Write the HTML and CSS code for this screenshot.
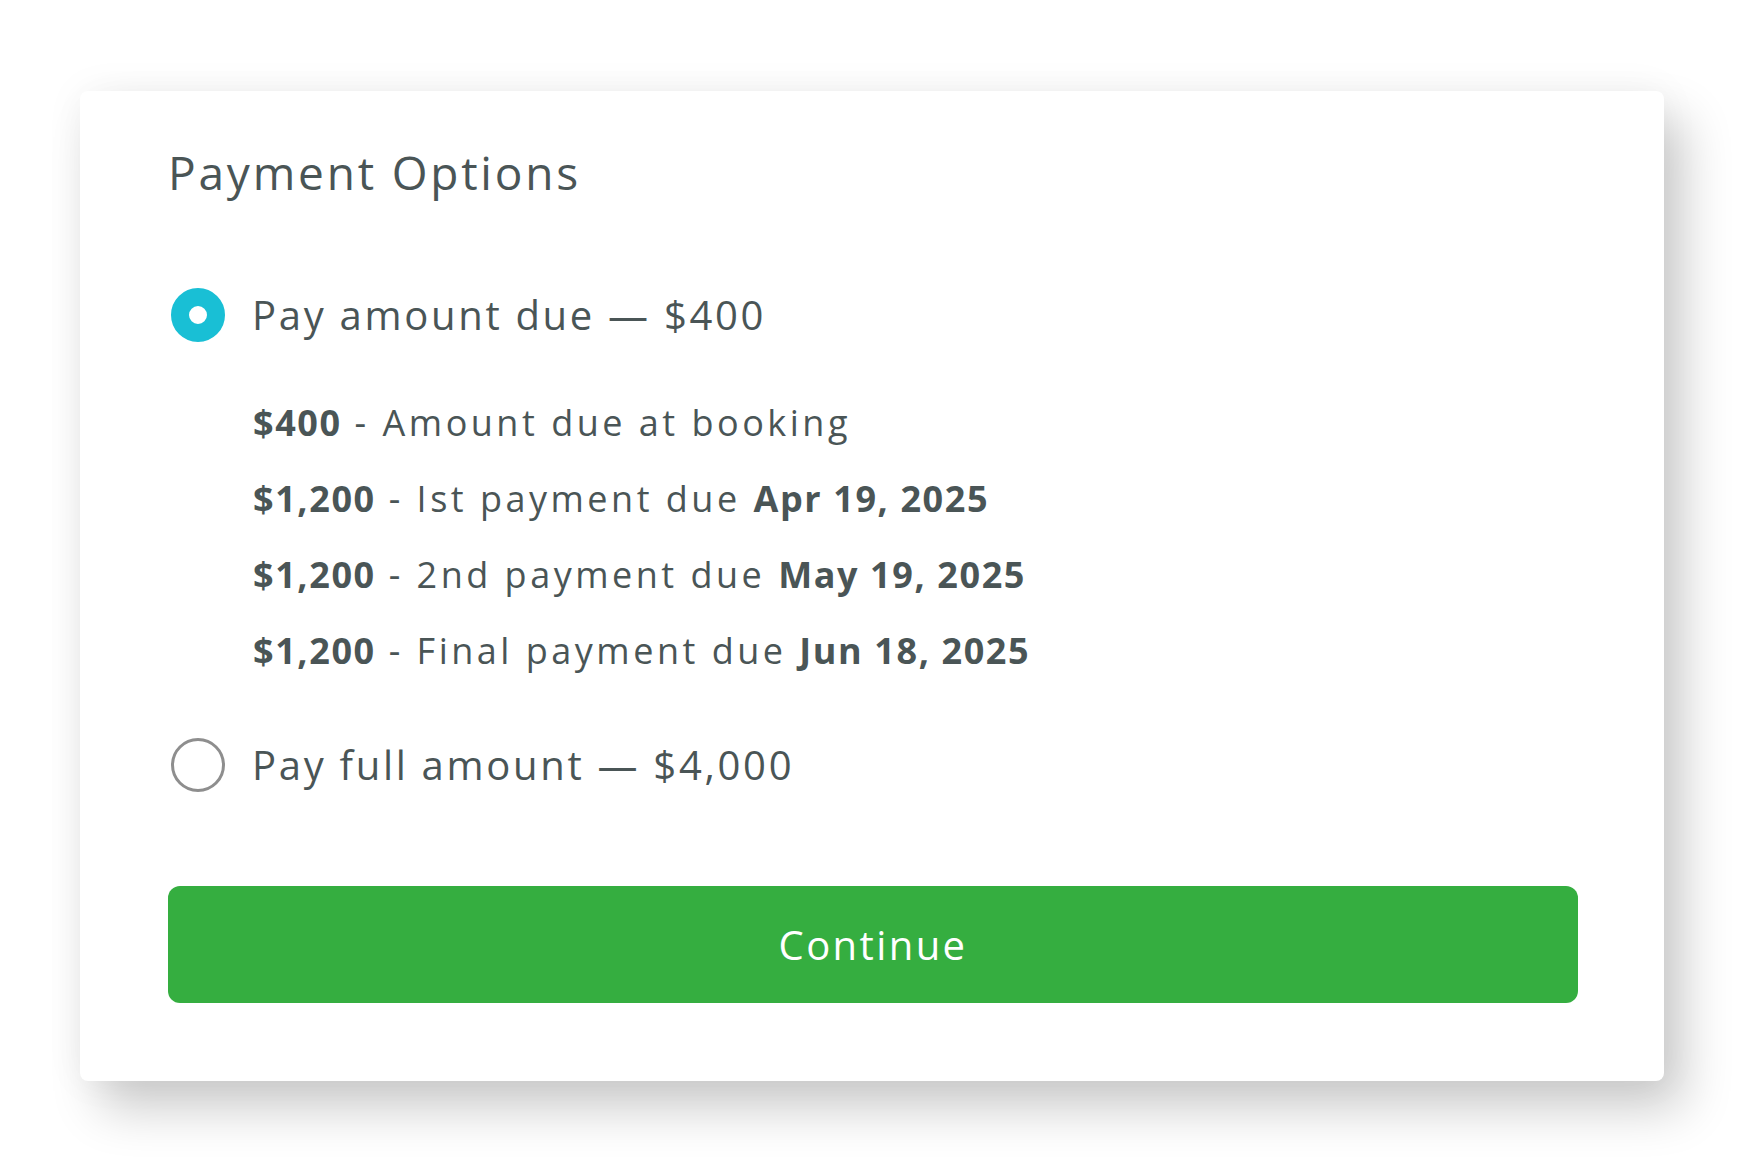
FILE: index.html
```html
<!DOCTYPE html>
<html lang="en">
<head>
  <meta charset="UTF-8" />
  <meta name="viewport" content="width=device-width, initial-scale=1.0"/>
  <title>Payment Options</title>
  <link rel="stylesheet" href="styles.css">
</head>
<body>
  <div class="card">
    <h2 class="title">Payment Options</h2>

    <label class="option">
      <input type="radio" name="pay" value="due" checked />
      <span>Pay amount due — $400</span>
    </label>

    <!-- schedule for the amount-due option -->
    <div class="schedule">
      <div class="line"><b>$400</b> - Amount due at booking</div>
      <div class="line"><b>$1,200</b> - Ist payment due <b>Apr 19, 2025</b></div>
      <div class="line"><b>$1,200</b> - 2nd payment due <b>May 19, 2025</b></div>
      <div class="line"><b>$1,200</b> - Final payment due <b>Jun 18, 2025</b></div>
    </div>

    <label class="option">
      <input type="radio" name="pay" value="full" />
      <span>Pay full amount — $4,000</span>
    </label>

    <button class="continue-btn">Continue</button>
  </div>
</body>
</html>
```

FILE: styles.css
```css
body {
  font-family: "Open Sans", Arial, sans-serif;
  background: #fff;
  color: #4a5556;
  margin: 0;
  padding: 91px 80px;
}

.card {
  background: white;
  border-radius: 8px;
  padding: 53px 86px 78px 88px;
  box-shadow: 20px 28px 50px rgba(0, 0, 0, 0.2), 0 0 40px rgba(0, 0, 0, 0.05);
}

.title {
  font-size: 46px;
  font-weight: 400;
  line-height: 56px;
  letter-spacing: 2.8px;
  margin: 0 0 88px 0;
}

.option {
  display: flex;
  align-items: center;
  gap: 27px;
  font-size: 40px;
  line-height: 54px;
  letter-spacing: 2.7px;
  cursor: pointer;
}

.option input {
  appearance: none;
  -webkit-appearance: none;
  margin: 0 0 0 3px;
  width: 54px;
  height: 54px;
  border-radius: 50%;
  border: 3px solid #8e8e8e;
  background: white;
  flex-shrink: 0;
}

.option input:checked {
  border: 18px solid #19bfd5;
}

.schedule {
  margin: 43px 0 49px 0;
  padding-left: 85px;
  font-size: 36px;
  line-height: 76px;
  letter-spacing: 3.5px;
}

.schedule b {
  font-weight: 700;
  letter-spacing: 1.6px;
}

.continue-btn {
  display: block;
  width: 100%;
  height: 117px;
  margin-top: 94px;
  background-color: #35ae40;
  color: white;
  font-family: inherit;
  font-size: 40px;
  letter-spacing: 2.4px;
  border: none;
  border-radius: 12px;
  cursor: pointer;
}
```
